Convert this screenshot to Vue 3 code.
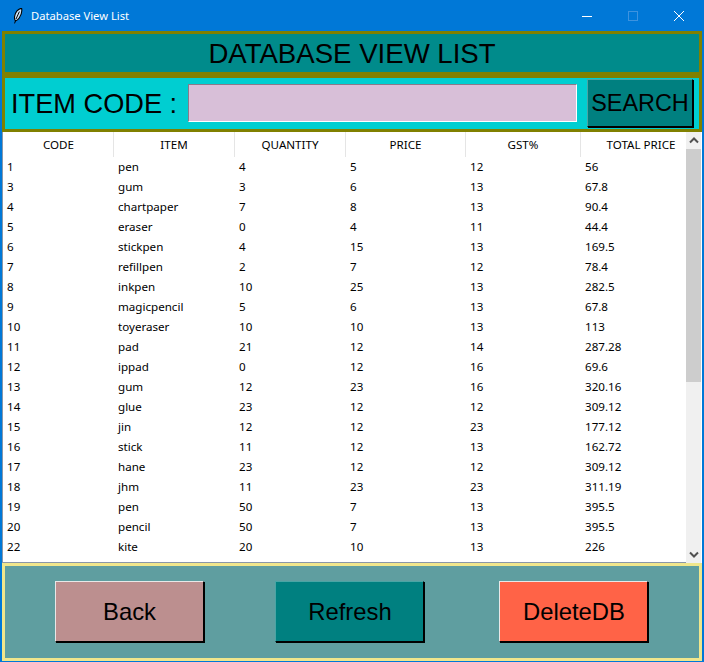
<template>
  <div class="window">
    <div class="titlebar">
      <svg class="feather" width="16" height="16" viewBox="0 0 16 16">
        <path d="M5.5 13 C3.8 11 4.3 6.5 6.8 3.2 C8.4 1.2 10.4 0.4 11.6 0.4 C12.2 3 11.2 7 9.2 10 C8.1 11.6 7 12.6 5.5 13 Z" fill="#cfe4f7" stroke="#000" stroke-width="1.1" />
        <path d="M4.6 15.4 L5.5 12.6 M6 11 L9.4 3.6" stroke="#000" stroke-width="1" fill="none" />
      </svg>
      <span class="wintitle">Database View List</span>
      <div class="controls">
        <svg width="46" height="30" viewBox="0 0 46 30"><path d="M18 15.5h10" stroke="#fff" /></svg>
        <svg width="46" height="30" viewBox="0 0 46 30"><rect x="18.5" y="10.5" width="9" height="9" fill="none" stroke="#3d93df" /></svg>
        <svg width="46" height="30" viewBox="0 0 46 30"><path d="M18 10l10 10M28 10l-10 10" stroke="#fff" /></svg>
      </div>
    </div>
    <div class="content">
      <div class="heading">DATABASE VIEW LIST</div>
      <div class="searchbar">
        <label class="searchlabel">ITEM CODE :</label>
        <input class="searchinput" type="text" />
        <button class="btn searchbtn">SEARCH</button>
      </div>
      <div class="tablewrap">
        <div class="table">
          <div class="row head">
            <div v-for="c in columns" :key="c" class="cell">{{ c }}</div>
          </div>
          <div v-for="r in rows" :key="r[0]" class="row">
            <div v-for="(v, i) in r" :key="i" class="cell">{{ v }}</div>
          </div>
        </div>
        <div class="scrollbar">
          <div class="arrow">
            <svg width="10" height="7" viewBox="0 0 10 7"><path d="M1 5.5l4-4 4 4" fill="none" stroke="#505050" stroke-width="2" /></svg>
          </div>
          <div class="thumb"></div>
          <div class="track"></div>
          <div class="arrow">
            <svg width="10" height="7" viewBox="0 0 10 7"><path d="M1 1.5l4 4 4-4" fill="none" stroke="#505050" stroke-width="2" /></svg>
          </div>
        </div>
      </div>
      <div class="footer">
        <button class="btn big back">Back</button>
        <button class="btn big refresh">Refresh</button>
        <button class="btn big delete">DeleteDB</button>
      </div>
    </div>
  </div>
</template>

<script setup>
const columns = ["CODE", "ITEM", "QUANTITY", "PRICE", "GST%", "TOTAL PRICE"];

const rows = [
  [1, "pen", 4, 5, 12, 56],
  [3, "gum", 3, 6, 13, 67.8],
  [4, "chartpaper", 7, 8, 13, 90.4],
  [5, "eraser", 0, 4, 11, 44.4],
  [6, "stickpen", 4, 15, 13, 169.5],
  [7, "refillpen", 2, 7, 12, 78.4],
  [8, "inkpen", 10, 25, 13, 282.5],
  [9, "magicpencil", 5, 6, 13, 67.8],
  [10, "toyeraser", 10, 10, 13, 113],
  [11, "pad", 21, 12, 14, 287.28],
  [12, "ippad", 0, 12, 16, 69.6],
  [13, "gum", 12, 23, 16, 320.16],
  [14, "glue", 23, 12, 12, 309.12],
  [15, "jin", 12, 12, 23, 177.12],
  [16, "stick", 11, 12, 13, 162.72],
  [17, "hane", 23, 12, 12, 309.12],
  [18, "jhm", 11, 23, 23, 311.19],
  [19, "pen", 50, 7, 13, 395.5],
  [20, "pencil", 50, 7, 13, 395.5],
  [22, "kite", 20, 10, 13, 226],
];
</script>

<style>
html,
body {
  margin: 0;
  background: #fff;
}
</style>

<style scoped>
.window {
  width: 704px;
  height: 662px;
  box-sizing: border-box;
  display: flex;
  flex-direction: column;
  background: #f0f0f0;
  border: solid #0078d7;
  border-width: 0 2px 1px 2px;
  font-family: "Liberation Sans", Arial, sans-serif;
  color: #000;
  overflow: hidden;
}

.titlebar {
  height: 31px;
  flex: none;
  display: flex;
  align-items: center;
  background: #0078d7;
  color: #fff;
  font-family: "Noto Sans", "Open Sans", sans-serif;
  font-size: 11.2px;
  margin: 0 -2px;
  padding-left: 10px;
}

.feather {
  margin-right: 5px;
}

.wintitle {
  flex: 1;
}

.controls {
  display: flex;
  margin-right: 2px;
}

.controls svg {
  display: block;
}

.content {
  flex: 1;
  display: flex;
  flex-direction: column;
  min-height: 0;
}

.heading {
  height: 44px;
  box-sizing: border-box;
  flex: none;
  background: #008b8b;
  border: 3px solid #808000;
  font-size: 27.6px;
  line-height: 40px;
  text-align: center;
}

.searchbar {
  height: 57px;
  box-sizing: border-box;
  flex: none;
  display: flex;
  align-items: center;
  background: #00ced1;
  border: 3px solid #808000;
  padding-left: 6px;
}

.searchlabel {
  width: 177px;
  font-size: 27.2px;
  padding-top: 1px;
  white-space: pre;
}

.searchinput {
  width: 389px;
  height: 38px;
  box-sizing: border-box;
  background: #d8bfd8;
  border: 1px solid;
  border-color: #8a7a8a #fff #fff #8a7a8a;
  padding: 0;
  margin: 0 10px 1px 0;
}

.btn {
  font-family: "Liberation Sans", Arial, sans-serif;
  color: #000;
  padding: 0;
  border: 1px solid;
  box-sizing: border-box;
  border-color: #e8e8e8 #000 #000 #e8e8e8;
  box-shadow: 1px 1px 0 #000;
}

.searchbtn {
  width: 106px;
  height: 48px;
  margin-bottom: 1px;
  background: #008080;
  font-size: 23.4px;
  border-color: #4aa5a5 #000 #000 #4aa5a5;
}

.tablewrap {
  flex: 1;
  min-height: 0;
  display: flex;
  background: #fff;
}

.table {
  flex: 1;
  min-width: 0;
  overflow: hidden;
  box-sizing: border-box;
  padding-left: 1px;
  border-left: 1px solid #8a97a8;
  border-bottom: 1px solid #8a97a8;
  font-family: "Noto Sans", "Open Sans", sans-serif;
  font-size: 11.6px;
}

.row {
  display: grid;
  grid-template-columns: 110px 121px 111px 120px 115px 120px;
  height: 20px;
  line-height: 20px;
}

.cell {
  padding-left: 4px;
  white-space: nowrap;
}

.cell:first-child {
  padding-left: 3px;
}

.head {
  height: 25px;
  line-height: 25px;
}

.head .cell {
  padding: 0;
  text-align: center;
  border-right: 1px solid #e5e5e5;
}

.head .cell:last-child {
  border-right: 0;
}

.scrollbar {
  width: 15px;
  flex: none;
  display: flex;
  flex-direction: column;
  margin-right: 1px;
  background: #f0f0f0;
}

.arrow {
  height: 17px;
  flex: none;
  display: flex;
  align-items: center;
  justify-content: center;
}

.thumb {
  height: 233px;
  flex: none;
  background: #cdcdcd;
}

.track {
  flex: 1;
}

.footer {
  height: 98px;
  flex: none;
  box-sizing: border-box;
  display: flex;
  align-items: center;
  background: #5f9ea0;
  border: 3px solid #f0e68c;
  padding-left: 50px;
}

.big {
  width: 149px;
  height: 61px;
  margin-bottom: 1px;
  font-size: 23.8px;
}

.back {
  background: #bc8f8f;
}

.refresh {
  padding-left: 1px;
  background: #008080;
  margin-left: 71px;
  border-color: #4aa5a5 #000 #000 #4aa5a5;
}

.delete {
  padding-left: 1px;
  background: #ff6347;
  margin-left: 75px;
}
</style>
